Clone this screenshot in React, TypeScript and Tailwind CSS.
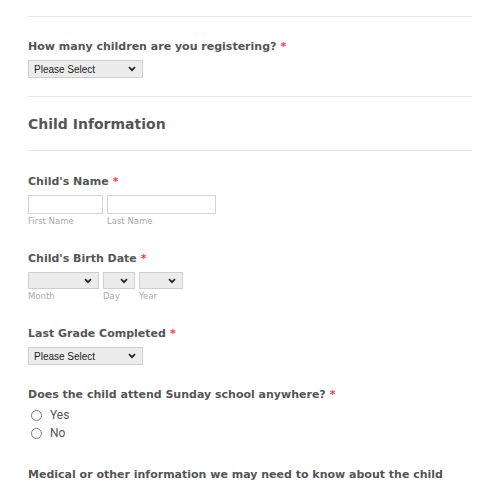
import React from 'react';

const font = { fontFamily: '"DejaVu Sans", Verdana, sans-serif' };

const Star = () => <span className="text-[#ff3b3b] ml-[4px]">*</span>;

const Chevron = () => (
  <svg width="8" height="6" viewBox="0 0 8 6" className="shrink-0">
    <path d="M1 1.2l3 3 3-3" fill="none" stroke="#222" strokeWidth="1.7" />
  </svg>
);

const FakeSelect = ({ width, height = 'h-[18px]', text }: { width: string; height?: string; text?: string }) => (
  <div
    className={`${width} ${height} border border-[#cfcfcf] bg-[#ececec] flex items-center justify-between pl-[5px] pr-[6px] text-[10px] text-[#222]`}
    style={{ fontFamily: '"Liberation Sans", Arial, sans-serif' }}
  >
    <span>{text}</span>
    <Chevron />
  </div>
);

const Label = ({ children }: { children: React.ReactNode }) => (
  <div className="text-[11px] leading-[16px] font-bold text-[#555]">{children}</div>
);

const Sub = ({ children, width }: { children: React.ReactNode; width: string }) => (
  <div className={`${width} text-[8.5px] leading-[12px] mt-[1px] text-[#aaa]`}>{children}</div>
);

const Radio = ({ label }: { label: string }) => (
  <div className="flex items-center h-[18px]">
    <span className="w-[11px] h-[11px] rounded-full border border-[#777] bg-white ml-[3px]" />
    <span className="ml-[8px] text-[12px] text-[#555]" style={{ fontFamily: 'Roboto, sans-serif' }}>{label}</span>
  </div>
);

export default function App() {
  return (
    <div className="w-[500px] h-[484px] bg-white overflow-hidden px-[28px]" style={font}>
      <div className="h-[16px]" />
      <div className="border-t border-[#e6e6e6]" />

      <div className="mt-[22px]">
        <Label>How many children are you registering?<Star /></Label>
        <div className="mt-[5px]">
          <FakeSelect width="w-[115px]" text="Please Select" />
        </div>
      </div>

      <div className="mt-[18px] border-t border-[#e6e6e6]" />
      <div className="mt-[17px] text-[14px] leading-[20px] font-bold text-[#555]">Child Information</div>
      <div className="mt-[16px] border-t border-[#e6e6e6]" />

      <div className="mt-[23px]">
        <Label>Child's Name<Star /></Label>
        <div className="flex gap-[4px] mt-[5px]">
          <div>
            <div className="w-[75px] h-[19px] border border-[#d4d4d4] bg-white" />
            <Sub width="w-[75px]">First Name</Sub>
          </div>
          <div>
            <div className="w-[109px] h-[19px] border border-[#d4d4d4] bg-white" />
            <Sub width="w-[109px]">Last Name</Sub>
          </div>
        </div>
      </div>

      <div className="mt-[24px]">
        <Label>Child's Birth Date<Star /></Label>
        <div className="flex gap-[4px] mt-[5px]">
          <div>
            <FakeSelect width="w-[71px]" height="h-[17px]" />
            <Sub width="w-[71px]">Month</Sub>
          </div>
          <div>
            <FakeSelect width="w-[32px]" height="h-[17px]" />
            <Sub width="w-[32px]">Day</Sub>
          </div>
          <div>
            <FakeSelect width="w-[44px]" height="h-[17px]" />
            <Sub width="w-[44px]">Year</Sub>
          </div>
        </div>
      </div>

      <div className="mt-[24px]">
        <Label>Last Grade Completed<Star /></Label>
        <div className="mt-[5px]">
          <FakeSelect width="w-[115px]" text="Please Select" />
        </div>
      </div>

      <div className="mt-[22px]">
        <Label>Does the child attend Sunday school anywhere?<Star /></Label>
        <div className="mt-[3px]">
          <Radio label="Yes" />
          <Radio label="No" />
        </div>
      </div>

      <div className="mt-[25px]">
        <Label>
          Medical or other information we may need to know about the child (including food allergies).<Star />
        </Label>
      </div>
    </div>
  );
}
